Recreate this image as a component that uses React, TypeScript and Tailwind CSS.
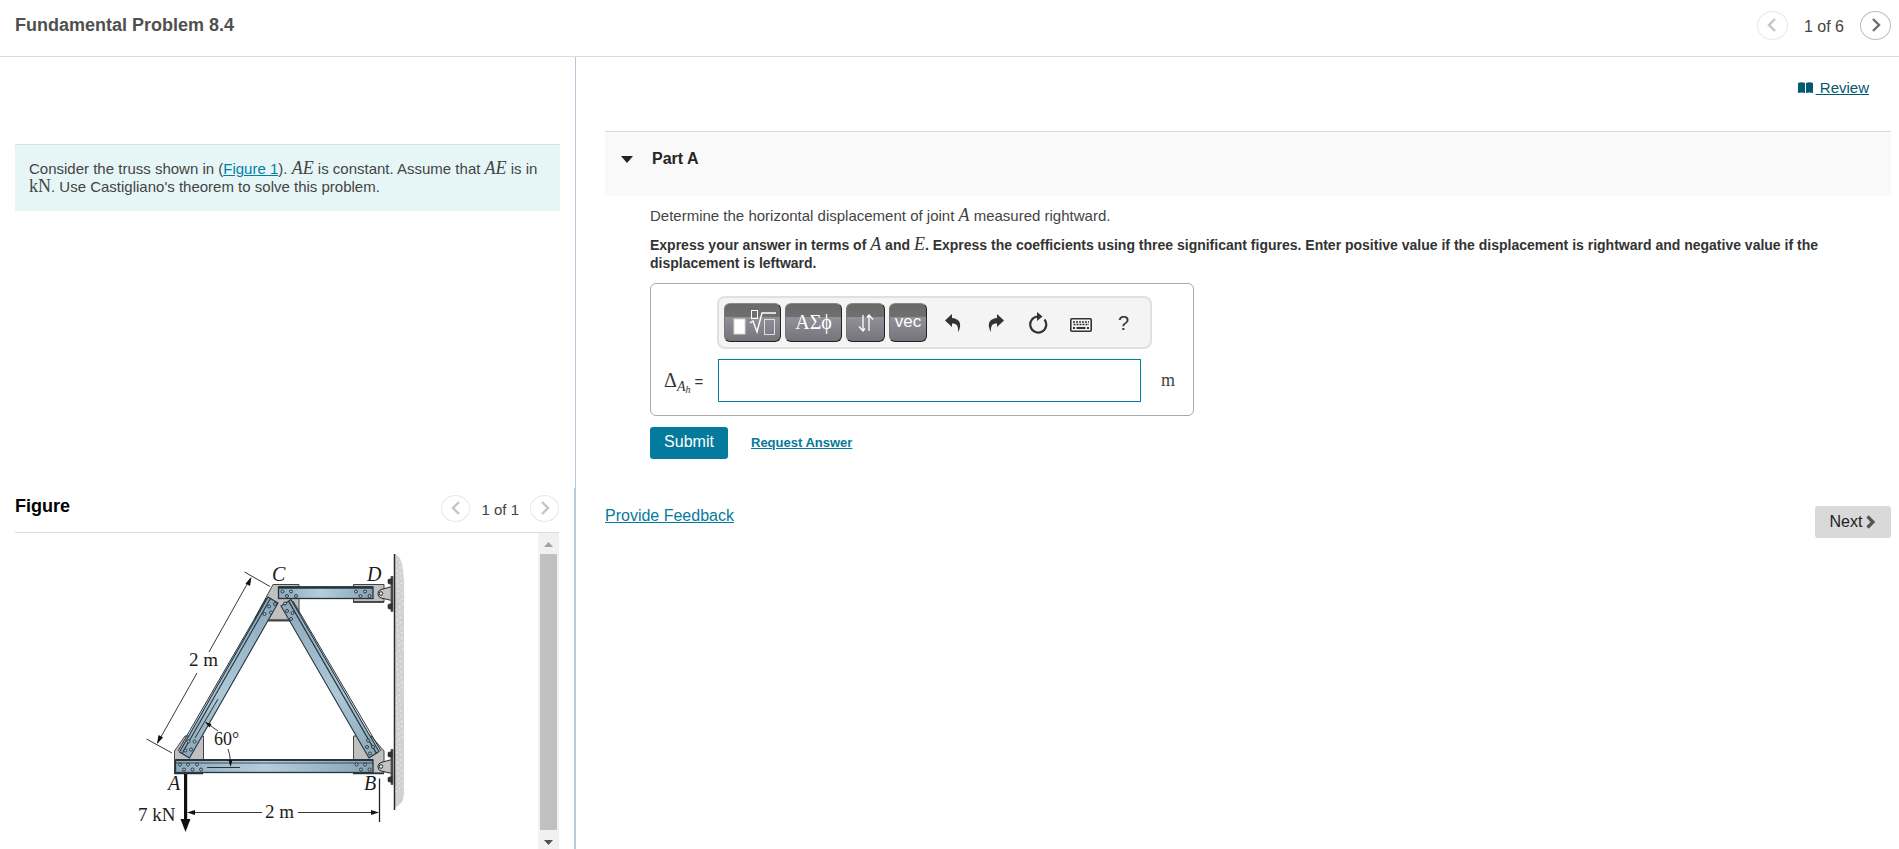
import type { ReactNode } from 'react';

function MathText({ children, upright = false }: { children: ReactNode; upright?: boolean }) {
  return (
    <span
      className={`font-['Liberation_Serif',serif] text-[18px] leading-[14px] font-normal ${
        upright ? '' : 'italic'
      }`}
    >
      {children}
    </span>
  );
}

interface PagerProps {
  label: string;
  small?: boolean;
  nextDisabled?: boolean;
}

function Pager({ label, small = false, nextDisabled = false }: PagerProps) {
  const circle = small ? 'h-[27px] w-[29px]' : 'h-[29px] w-[31px]';
  return (
    <div className={`flex items-start ${small ? 'gap-[11px]' : 'gap-4'}`}>
      <button
        aria-label="Previous"
        disabled
        className={`flex ${circle} items-center justify-center rounded-[50%] border border-[#e8e8e8] text-[#c4c4c4]`}
      >
        <Chevron left />
      </button>
      <span className={`text-[#444] ${small ? 'pt-[3px] text-[15px] leading-6' : 'pt-1 text-base'}`}>{label}</span>
      <button
        aria-label="Next item"
        disabled={nextDisabled}
        className={`flex ${circle} items-center justify-center rounded-[50%] border ${
          nextDisabled ? 'border-[#e8e8e8] text-[#c4c4c4]' : 'border-[#bdbdbd] text-[#6a7070]'
        }`}
      >
        <Chevron />
      </button>
    </div>
  );
}

function Chevron({ left = false }: { left?: boolean }) {
  return (
    <svg width="10" height="16" viewBox="0 0 10 16" fill="none" stroke="currentColor" strokeWidth="2.4">
      <path d={left ? 'M8 1 L2 7 L8 13' : 'M2 1 L8 7 L2 13'} />
    </svg>
  );
}

// [x, y] of every bolt head on the gusset plates
const topBolts = [
  [152.5, 51.5], [161, 51.5], [157, 56], [166, 56],
  [226, 51.5], [235, 51.5], [230.5, 56], [239.5, 56],
];

const slantBolts = [
  [139, 66.5], [145, 64], [134.5, 74], [141, 72.5],
  [155, 63.5], [157, 71], [162.5, 73], [161, 79],
  [58.5, 201.5], [64.5, 201.5], [55.5, 210.5], [61, 209.5],
  [238, 200.5], [237, 207], [243, 207], [240, 213.5],
];

const bottomBolts = [
  [50, 224.5], [58, 224.5], [67, 224.5], [54, 229.5], [62.5, 229.5], [71, 229.5],
  [226.5, 224.5], [235, 224.5], [231, 229.5], [239.5, 229.5],
];

const speckles = Array.from({ length: 90 }, (_, i) => [266 + ((i * 37) % 70) / 10, 20 + i * 2.6]);

function Support({ y }: { y: number }) {
  return (
    <g stroke="#2b2b2b">
      <path d={`M262 ${y - 7} L251 ${y - 4} A4.5 4.5 0 0 0 251 ${y + 4.5} L262 ${y + 7} Z`} fill="#c3c3c3" />
      <circle cx="251" cy={y} r="1.8" fill="#eee" />
      <rect x="261" y={y - 17} width="2" height="35" fill="#555" strokeWidth="0.6" />
      <path d={`M262 ${y - 15} l-4 1 v4 l4 1 Z M262 ${y + 10} l-4 1 v4 l4 1 Z`} fill="#333" strokeWidth="0.6" />
    </g>
  );
}

function TrussFigure() {
  return (
    <svg
      width="293"
      height="316"
      viewBox="0 -7 293 316"
      role="img"
      aria-label="Truss with joints A, B, C and D"
      className="font-['Liberation_Serif',serif]"
    >
      <defs>
        <linearGradient id="beam" x1="0" x2="1">
          <stop offset="0" stopColor="#8eaabc" />
          <stop offset="0.45" stopColor="#b4cddc" />
          <stop offset="1" stopColor="#86a3b5" />
        </linearGradient>
        <linearGradient id="slant" x1="0" x2="0" y1="0" y2="1">
          <stop offset="0" stopColor="#8ba8ba" />
          <stop offset="0.6" stopColor="#adc8d7" />
          <stop offset="1" stopColor="#8ba8ba" />
        </linearGradient>
      </defs>

      {/* wall */}
      <path d="M265 14 Q270 16 272 24 Q275 40 274 70 L274 250 Q274 262 270 264 L265 268 Z" fill="#d2d2d4" />
      {speckles.map(([x, y]) => (
        <circle key={y} cx={x} cy={y} r="0.7" fill="#f1f1f1" />
      ))}
      <path d="M264.5 14 V270" stroke="#2b2b2b" strokeWidth="1.5" />

      {/* gusset plates */}
      <g fill="#c0c0c0" stroke="#444">
        <path d="M143 44.5 H169 V80 H126 L125 78 Z" />
        <path d="M126 80.5 H168" strokeWidth="2" />
        <path d="M223.5 44.5 H254 V62 H223.5 Z" />
        <path d="M44.5 222 V211 L55 196 H73.5 V233 H44.5 Z" />
        <path d="M223.5 196 H241 L254 211 V233 H223.5 Z" />
      </g>
      <path d="M44 233.5 H73 M223 233.5 H254 M223 62 H254" stroke="#333" strokeWidth="1.5" />

      {/* slanted members */}
      <g stroke="#26343d">
        <path d="M138 57 L148 63 L59.5 218 L49.5 212 Z" fill="url(#slant)" strokeWidth="1.1" />
        <path d="M140.5 58.5 L52 213.5" strokeWidth="1.1" />
        <path d="M136.5 58 L48 211" />
        <path d="M151 66 L161 59.5 L249 211.5 L239 218 Z" fill="url(#slant)" strokeWidth="1.1" />
        <path d="M158.5 61 L246.5 213.5" strokeWidth="1.3" />
        <path d="M163 61 L251 211" />
      </g>

      {/* horizontal members */}
      <g stroke="#26343d">
        <rect x="148.5" y="47" width="94.5" height="11.5" fill="url(#beam)" strokeWidth="1.3" />
        <path d="M148.5 47.5 H243" strokeWidth="2.5" />
        <rect x="45.5" y="220" width="197.5" height="12.5" fill="url(#beam)" strokeWidth="1.3" />
        <path d="M45.5 220 H243" strokeWidth="1.8" />
        <path d="M45.5 223 H243" strokeWidth="0.8" />
      </g>

      <g fill="#a9c0cd" stroke="#222c33" strokeWidth="0.9">
        {[...topBolts, ...slantBolts, ...bottomBolts].map(([x, y]) => (
          <circle key={`${x}-${y}`} cx={x} cy={y} r="1.5" />
        ))}
      </g>

      <Support y={53.5} />
      <Support y={226.5} />

      {/* dimension lines */}
      <g stroke="#222" strokeWidth="0.9" fill="none">
        <path d="M114.5 32 L140 46.5 M16.5 199 L42 213" />
        <path d="M120.5 38 L79 112 M67 133 L27.5 203" />
        <path d="M58 272.5 H132 M168 272.5 H248" />
        <path d="M249.5 238.5 V282" strokeWidth="1.3" />
        <path d="M88 159 L65 198 M77 227.5 H110" />
        <path d="M76 182.5 L88 191 M98 209 Q100 214 100.5 222" />
      </g>
      <g fill="#111">
        <path d="M121.5 37 L120 46 L115.5 43.5 Z" />
        <path d="M27 204 L28.5 195 L33 197.5 Z" />
        <path d="M57 272.5 L65 270 V275 Z" />
        <path d="M249 272.5 L241 270 V275 Z" />
        <path d="M75 182 L81.5 184 L79.5 187.5 Z" />
        <path d="M100.5 227 L98.5 220 H102.5 Z" />
        <rect x="54" y="234" width="3.2" height="48" />
        <path d="M50.5 279 H60.5 L55.5 292 Z" />
      </g>

      <g fill="#1c1c1c" fontSize="19">
        <text x="59" y="126">2 m</text>
        <text x="135" y="278">2 m</text>
        <text x="8" y="281">7 kN</text>
        <text x="84" y="205" fontSize="18">60°</text>
        <g fontStyle="italic" fontSize="20">
          <text x="142" y="41">C</text>
          <text x="237" y="41">D</text>
          <text x="38" y="250">A</text>
          <text x="234" y="250">B</text>
        </g>
      </g>
    </svg>
  );
}

const keyClass =
  'flex h-[39px] justify-center rounded-[6px] border border-t-[#8a8a8a] border-l-[#777] border-r-[#222] border-b-[#222] bg-[linear-gradient(#6a6a6a_0%,#6f6f6f_34%,#92919b_35%,#74747a_100%)] text-white';

const iconClass = 'flex h-[39px] w-[43px] items-center justify-center text-[#333]';

function EquationToolbar() {
  return (
    <div className="flex w-[435px] items-center rounded-lg border-2 border-[#e0e0e0] bg-[#f4f4f4] px-[5px] py-[5px]">
      <div className="flex gap-1 pr-[5px]">
        <button aria-label="Templates" className={`${keyClass} w-[57px] items-center`}>
          <svg width="46" height="28" viewBox="0 0 46 28" fill="none" stroke="#fff">
            <rect x="4" y="10" width="11" height="15" fill="#fff" stroke="#d8d8d8" />
            <path d="M20 14 l3 -2 l4 11 l5 -19 h14" strokeWidth="1.4" />
            <rect x="21.5" y="1.5" width="6" height="8" />
            <rect x="34.5" y="10.5" width="10" height="15" stroke="#ddd" />
          </svg>
        </button>
        <button className={`${keyClass} w-[57px] pt-[6px] font-['Liberation_Serif',serif] text-xl leading-6`}>
          ΑΣϕ
        </button>
        <button aria-label="Arrows" className={`${keyClass} w-[39px] items-center`}>
          <svg width="16" height="20" viewBox="0 0 16 20" fill="none" stroke="#fff" strokeWidth="1.3">
            <path d="M5 2 V18 M1 13.5 L5 18 L7 15.5 M11 18 V2 M15 6.5 L11 2 L9 4.5" />
          </svg>
        </button>
        <button className={`${keyClass} w-[38px] pt-[6px] text-[17px] leading-6`}>vec</button>
      </div>
      <button aria-label="Undo" className={iconClass}>
        <svg width="16" height="18" viewBox="0 0 16 18" fill="currentColor">
          <path d="M0 6.5 L7 0 V4 C13 4.5 16 8 15 13 Q14.5 16 13 18 C13.5 12 12 9.5 7 9.5 V13 Z" />
        </svg>
      </button>
      <button aria-label="Redo" className={iconClass}>
        <svg width="16" height="18" viewBox="0 0 16 18" fill="currentColor">
          <path d="M16 6.5 L9 0 V4 C3 4.5 0 8 1 13 Q1.5 16 3 18 C2.5 12 4 9.5 9 9.5 V13 Z" />
        </svg>
      </button>
      <button aria-label="Reset" className={iconClass}>
        <svg width="20" height="22" viewBox="0 0 20 22" fill="none" stroke="currentColor" strokeWidth="2.2">
          <path d="M10 4.5 A8 8 0 1 0 16.5 7.5" />
          <path d="M9 0 L14.5 4.5 L9 9 Z" fill="currentColor" stroke="none" />
        </svg>
      </button>
      <button aria-label="Keyboard" className={iconClass}>
        <svg width="22" height="22" viewBox="0 0 22 22" fill="none" stroke="currentColor">
          <rect x="0.8" y="6.8" width="20.4" height="12.4" rx="1" strokeWidth="1.6" />
          <path d="M3 10 H19 M3.5 12.5 H19" strokeWidth="1.7" strokeDasharray="2 1" />
          <path d="M3 16 H5 M6.5 16 H15.5 M17 16 H19" strokeWidth="1.8" />
        </svg>
      </button>
      <button aria-label="Help" className={`${iconClass} text-xl`}>
        ?
      </button>
    </div>
  );
}

export default function App() {
  return (
    <div className="flex min-h-screen flex-col bg-white font-['Liberation_Sans',Arial,sans-serif] text-[15px] leading-[18px] text-[#444]">
      <header className="flex h-[57px] items-start justify-between border-b border-[#dcdcdc] pr-2 pl-[15px]">
        <h1 className="pt-[13px] text-lg leading-6 font-bold text-[#505050]">Fundamental Problem 8.4</h1>
        <div className="pt-[11px]">
          <Pager label="1 of 6" />
        </div>
      </header>

      <div className="flex flex-1">
        <aside className="flex w-[576px] shrink-0 flex-col">
          <div className="flex-1 border-r border-[#b9c8d8] pt-[87px] pr-[15px] pl-[15px]">
            <p className="border-t border-[#dcdcdc] bg-[#e6f6f6] px-[14px] pt-[15px] pb-[15px]">
              Consider the truss shown in (
              <a href="#figure" className="text-[#007fa3] underline">
                Figure 1
              </a>
              ). <MathText>AE</MathText> is constant. Assume that <MathText>AE</MathText> is in{' '}
              <MathText upright>kN</MathText>. Use Castigliano's theorem to solve this problem.
            </p>
          </div>

          <section id="figure" className="border-r-2 border-[#b4cbe0] pr-[15px] pl-[15px]">
            <div className="flex h-[45px] items-start justify-between border-b border-[#dcdcdc] pt-[7px]">
              <h2 className="text-lg leading-[22px] font-bold text-black">Figure</h2>
              <Pager label="1 of 1" small nextDisabled />
            </div>
            <div className="flex">
              <div className="flex flex-1 justify-center">
                <TrussFigure />
              </div>
              <div className="flex w-[21px] flex-col items-center bg-[#f1f1f1]">
                <svg width="9" height="21" viewBox="0 0 9 21" fill="#a3a3a3">
                  <path d="M0 14 L4.5 9 L9 14 Z" />
                </svg>
                <div className="w-[17px] flex-1 bg-[#c1c1c1]" />
                <svg width="9" height="19" viewBox="0 0 9 19" fill="#505050">
                  <path d="M0 10 L4.5 15 L9 10 Z" />
                </svg>
              </div>
            </div>
          </section>
        </aside>

        <main className="min-w-0 flex-1 pr-2 pl-[29px]">
          <div className="flex h-[74px] justify-end pt-[22px] pr-[22px]">
            <a href="#review" className="flex h-[18px] items-center gap-[3px] text-[#005a70]">
              <svg width="15" height="12" viewBox="0 0 15 12" fill="currentColor">
                <path d="M0 1 Q3.5 -0.5 7 1 V11 Q3.5 10 0 11 Z M8 1 Q11.5 -0.5 15 1 V11 Q11.5 10 8 11 Z" />
              </svg>
              <span className="whitespace-pre underline"> Review</span>
            </a>
          </div>

          <section>
            <div className="flex h-[65px] items-start border-t border-[#dcdcdc] bg-[#f9f9f9] pt-[17px] pl-4">
              <button aria-label="Collapse part" className="mt-[6px] mr-[19px] h-2 w-3">
                <svg width="12" height="7" viewBox="0 0 12 7" fill="#222">
                  <path d="M0 0 H12 L6 7 Z" />
                </svg>
              </button>
              <h2 className="text-base leading-5 font-bold text-[#252525]">Part A</h2>
            </div>

            <div className="pt-[11px] pl-[45px]">
              <p>
                Determine the horizontal displacement of joint <MathText>A</MathText> measured rightward.
              </p>
              <p className="mt-[11px] text-[14px] leading-[18px] font-bold text-[#333]">
                Express your answer in terms of <MathText>A</MathText> and <MathText>E</MathText>. Express the
                coefficients using three significant figures. Enter positive value if the displacement is rightward
                and negative value if the displacement is leftward.
              </p>

              <div className="mt-[11px] w-[544px] rounded-md border border-[#aaa] pt-3 pb-[13px]">
                <div className="pl-[66px]">
                  <EquationToolbar />
                </div>
                <div className="mt-[10px] flex items-center">
                  <label htmlFor="answer" className="w-[67px] pl-[13px] text-[#333]">
                    <span className="font-['Liberation_Serif',serif] text-[20px] leading-none">Δ</span>
                    <sub className="font-['Liberation_Serif',serif] text-[14px] italic">
                      A<sub className="text-[10px]">h</sub>
                    </sub>{' '}
                    =
                  </label>
                  <input id="answer" type="text" className="h-[43px] w-[423px] border border-[#007fa3] bg-white px-2" />
                  <span className="pl-5">
                    <MathText upright>m</MathText>
                  </span>
                </div>
              </div>

              <div className="mt-[11px] flex items-center">
                <button className="h-8 w-[78px] rounded-[3px] bg-[#047a9c] pb-[2px] text-base text-white">
                  Submit
                </button>
                <a href="#answer" className="ml-[23px] text-[13px] font-bold text-[#047a9c] underline">
                  Request Answer
                </a>
              </div>
            </div>
          </section>

          <div className="mt-[47px] flex items-start justify-between">
            <a href="#feedback" className="text-base leading-5 text-[#047a9c] underline">
              Provide Feedback
            </a>
            <button className="flex h-8 w-[76px] items-center justify-center gap-1 rounded-[3px] bg-[#d9d9d9] text-base text-[#222]">
              Next
              <svg width="10" height="14" viewBox="0 0 10 14" fill="none" stroke="#555" strokeWidth="3.2">
                <path d="M1.5 1.5 L7 7 L1.5 12.5" />
              </svg>
            </button>
          </div>
        </main>
      </div>
    </div>
  );
}
